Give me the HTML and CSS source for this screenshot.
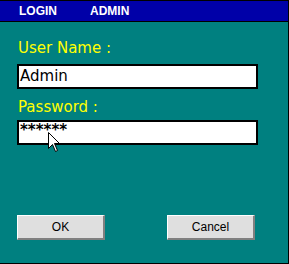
FILE: index.html
```html
<!DOCTYPE html>
<html>
<head>
<meta charset="utf-8">
<link rel="stylesheet" href="styles.css">
</head>
<body>
<div class="window">
  <div class="titlebar">
    <span class="menu">LOGIN</span>
    <span class="menu menu-admin">ADMIN</span>
  </div>
  <div class="content">
    <label class="label label-user">User Name :</label>
    <div class="field">Admin</div>
    <label class="label label-pass">Password :</label>
    <div class="field field-pass">******
      <svg class="cursor" width="13" height="21" viewBox="0 0 13 21"><path d="M0.5 0.5 V16.5 L4.5 12.5 L7.5 19.5 L9.5 18.5 L6.5 11.5 H11.5 Z" fill="#fff" stroke="#000" stroke-width="1"/></svg>
    </div>
    <div class="buttons">
      <button class="btn">OK</button>
      <button class="btn">Cancel</button>
    </div>
  </div>
</div>
</body>
</html>
```
FILE: styles.css
```css
html, body {
  margin: 0;
  padding: 0;
}
body {
  width: 289px;
  height: 264px;
  overflow: hidden;
}
.window {
  box-sizing: border-box;
  width: 289px;
  height: 264px;
  background: #008080;
  border-top: 1px solid #000;
  border-right: 1px solid #000;
  border-bottom: 1px solid #000;
  display: flex;
  flex-direction: column;
}
.titlebar {
  height: 20px;
  background: #0000a8;
  border-bottom: 1px solid #000;
  display: flex;
  align-items: center;
  padding-left: 19px;
  font-family: "Liberation Sans", Arial, sans-serif;
  font-weight: bold;
  font-size: 12px;
  line-height: 20px;
  color: #fff;
}
.menu-admin {
  margin-left: 33px;
}
.content {
  display: flex;
  flex-direction: column;
  padding: 17px 31px 0 17px;
}
.label {
  font-family: "DejaVu Sans", sans-serif;
  font-size: 15px;
  line-height: 18px;
  color: #ffff00;
  padding-left: 1px;
}
.field {
  position: relative;
  box-sizing: border-box;
  height: 25px;
  width: 241px;
  background: #fff;
  border: 2px solid #000;
  padding: 0 1px;
  font-family: "DejaVu Sans", sans-serif;
  font-size: 15px;
  line-height: 21px;
  color: #000;
  margin-top: 7px;
}
.label-pass {
  margin-top: 9px;
}
.field-pass {
  margin-top: 4px;
  font-weight: bold;
  line-height: 17px;
}
.cursor {
  position: absolute;
  left: 29px;
  top: 10px;
}
.buttons {
  display: flex;
  gap: 62px;
  margin-top: 70px;
}
.btn {
  box-sizing: border-box;
  width: 88px;
  height: 25px;
  background: #dfdfdf;
  border-style: solid;
  border-width: 1px 2px 2px 1px;
  border-color: #fff #808080 #808080 #fff;
  padding: 0;
  font-family: "Liberation Sans", Arial, sans-serif;
  font-size: 12px;
  color: #000;
}
```
